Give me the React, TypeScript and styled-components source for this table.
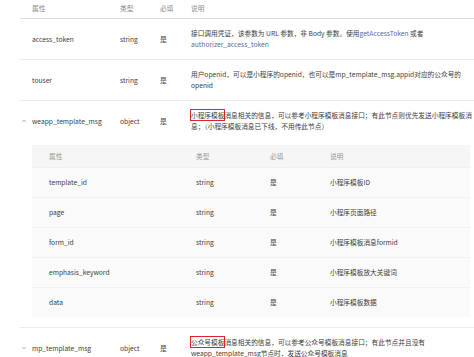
import React from "react";
import styled, { createGlobalStyle } from "styled-components";

const Global = createGlobalStyle`
  html, body { margin: 0; padding: 0; background: #fff; }
  body { font-family: "Noto Sans CJK SC", "Noto Sans", sans-serif; font-size: 6.7px; color: #3c3c3c; }
`;

const Page = styled.div`
  padding: 0 0 0 20px;
  width: 454px;
`;

const OuterRow = styled.div<{ $head?: boolean }>`
  display: grid;
  grid-template-columns: 12px 88px 40px 31px 1fr;
  align-items: center;
  line-height: 11px;
  padding: ${(p) => (p.$head ? "3px 0 4px" : "9px 0")};
  border-bottom: 1px solid ${(p) => (p.$head ? "#dcdcdc" : "#ececec")};
  color: ${(p) => (p.$head ? "#8c8c8c" : "#3c3c3c")};
`;

const RowGroup = styled.div`
  border-bottom: 1px solid #ececec;
`;

const GroupRow = styled(OuterRow)`
  border-bottom: none;
`;

const Desc = styled.div`
  padding-right: 0;
  line-break: strict;
`;

const Link = styled.span`
  color: #576b95;
`;

const Mark = styled.span`
  box-shadow: 0 0 0 1px #d9262b;
`;

const Chevron = styled.svg`
  width: 6px;
  height: 6px;
  display: block;
  margin-left: 1px;
`;

const Nested = styled.div`
  margin: 4px 4px 10px 12px;
  background: #fafafa;
`;

const NestedRow = styled.div<{ $head?: boolean }>`
  display: grid;
  grid-template-columns: 147px 74px 60px 1fr;
  align-items: center;
  padding: 0 0 0 17px;
  height: ${(p) => (p.$head ? "22px" : "29px")};
  line-height: 11px;
  background: ${(p) => (p.$head ? "#f6f6f6" : "transparent")};
  border-bottom: 1px solid #f1f1f1;
  color: ${(p) => (p.$head ? "#999" : "#3c3c3c")};
  &:last-child { border-bottom: none; }
`;

const Up = () => (
  <Chevron viewBox="0 0 6 6">
    <path d="M1 4 L3 2 L5 4" fill="none" stroke="#a0a0a0" strokeWidth="0.8" />
  </Chevron>
);
const Down = () => (
  <Chevron viewBox="0 0 6 6">
    <path d="M1 2 L3 4 L5 2" fill="none" stroke="#a0a0a0" strokeWidth="0.8" />
  </Chevron>
);

const nested = [
  ["template_id", "string", "是", "小程序模板ID"],
  ["page", "string", "是", "小程序页面路径"],
  ["form_id", "string", "是", "小程序模板消息formid"],
  ["emphasis_keyword", "string", "是", "小程序模板放大关键词"],
  ["data", "string", "是", "小程序模板数据"],
];

export default function App() {
  return (
    <Page>
      <Global />
      <OuterRow $head>
        <span />
        <span>属性</span>
        <span>类型</span>
        <span>必填</span>
        <span>说明</span>
      </OuterRow>
      <OuterRow>
        <span />
        <span>access_token</span>
        <span>string</span>
        <span>是</span>
        <Desc>
          接口调用凭证，该参数为 URL 参数，非 Body 参数。使用<Link>getAccessToken</Link> 或者{" "}
          <Link>authorizer_access_token</Link>
        </Desc>
      </OuterRow>
      <OuterRow>
        <span />
        <span>touser</span>
        <span>string</span>
        <span>是</span>
        <Desc>用户openid，可以是小程序的openid，也可以是mp_template_msg.appid对应的公众号的openid</Desc>
      </OuterRow>
      <RowGroup>
        <GroupRow>
          <Up />
          <span>weapp_template_msg</span>
          <span>object</span>
          <span>是</span>
          <Desc>
            <Mark>小程序模板</Mark>消息相关的信息，可以参考小程序模板消息接口；有此节点则优先发送小程序模板消息；（小程序模板消息已下线，不用传此节点）
          </Desc>
        </GroupRow>
        <Nested>
          <NestedRow $head>
            <span>属性</span>
            <span>类型</span>
            <span>必填</span>
            <span>说明</span>
          </NestedRow>
          {nested.map((r) => (
            <NestedRow key={r[0]}>
              <span>{r[0]}</span>
              <span>{r[1]}</span>
              <span>{r[2]}</span>
              <span>{r[3]}</span>
            </NestedRow>
          ))}
        </Nested>
      </RowGroup>
      <OuterRow>
        <Down />
        <span>mp_template_msg</span>
        <span>object</span>
        <span>是</span>
        <Desc>
          <Mark>公众号模板</Mark>消息相关的信息，可以参考公众号模板消息接口；有此节点并且没有 weapp_template_msg节点时，发送公众号模板消息
        </Desc>
      </OuterRow>
    </Page>
  );
}
